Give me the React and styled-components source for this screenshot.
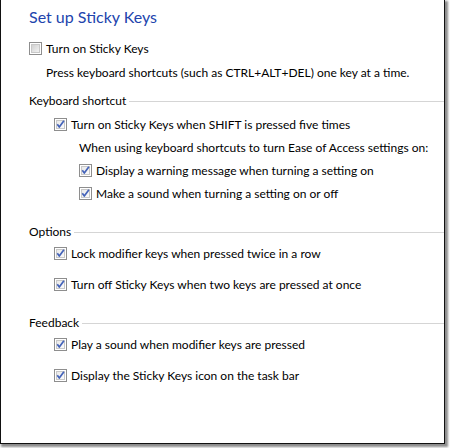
import React from 'react';
import styled, { createGlobalStyle } from 'styled-components';

const Global = createGlobalStyle`
  html, body { margin: 0; padding: 0; background: #fff; }
  body { font-family: Lato, "Open Sans", "Liberation Sans", sans-serif; }
`;

const Page = styled.div`
  width: 450px;
  height: 448px;
  background: #fff;
  overflow: hidden;
`;

const Window = styled.div`
  width: 443px;
  height: 443px;
  background: #fff;
  border: 1px solid #111;
  border-top: none;
  box-shadow: 2px 2px 2px 1px rgba(0, 0, 0, 0.45);
  display: flex;
  flex-direction: column;
  color: #000;
  font-size: 12px;
`;

const Title = styled.div`
  height: 20px;
  line-height: 20px;
  margin: 7px 0 0 28px;
  font-size: 16px;
  color: #2144ad;
`;

const Row = styled.div`
  height: 20px;
  display: flex;
  align-items: center;
  margin-top: ${({ $mt }) => $mt}px;
  padding-left: ${({ $indent }) => $indent}px;
`;

const Label = styled.span`
  margin-left: 4px;
  white-space: nowrap;
`;

const Note = styled.span`
  white-space: nowrap;
`;

const GroupRow = styled(Row)`
  padding-left: 28px;
`;

const GroupName = styled.span`
  white-space: nowrap;
  padding-right: 3px;
`;

const Rule = styled.div`
  flex: 1;
  height: 0;
  margin-top: 2px;
  border-top: 1px solid #d5d5d5;
`;

const Box = styled.svg`
  width: 13px;
  height: 13px;
  flex: none;
  display: block;
`;

const CheckBox = ({ checked }) => (
  <Box viewBox="0 0 13 13">
    <defs>
      <linearGradient id={checked ? 'gc' : 'gu'} x1="0" y1="0" x2="1" y2="1">
        <stop offset="0" stopColor={checked ? '#e8e8e8' : '#cfcfcf'} />
        <stop offset="1" stopColor={checked ? '#fcfcfc' : '#f4f4f4'} />
      </linearGradient>
    </defs>
    <rect x="0.5" y="0.5" width="12" height="12" fill="#fff" stroke="#8e8e8e" />
    <rect x="2.5" y="2.5" width="8" height="8" fill={`url(#${checked ? 'gc' : 'gu'})`} stroke="#c8c8c8" />
    {checked && (
      <polyline
        points="3.3,6.3 5.3,9 9.9,2.8"
        fill="none"
        stroke="#4463b9"
        strokeWidth="1.7"
        strokeLinejoin="round"
      />
    )}
  </Box>
);

const Option = ({ checked, mt, indent, children }) => (
  <Row $mt={mt} $indent={indent}>
    <CheckBox checked={checked} />
    <Label>{children}</Label>
  </Row>
);

const Group = ({ mt, children }) => (
  <GroupRow $mt={mt}>
    <GroupName>{children}</GroupName>
    <Rule />
  </GroupRow>
);

export default function App() {
  return (
    <Page>
      <Global />
      <Window>
        <Title>Set up Sticky Keys</Title>
        <Option mt={11} indent={28}>Turn on Sticky Keys</Option>
        <Row $mt={4} $indent={45}>
          <Note>Press keyboard shortcuts (such as CTRL+ALT+DEL) one key at a time.</Note>
        </Row>

        <Group mt={8}>Keyboard shortcut</Group>
        <Option checked mt={4} indent={53}>Turn on Sticky Keys when SHIFT is pressed five times</Option>
        <Row $mt={3} $indent={78}>
          <Note>When using keyboard shortcuts to turn Ease of Access settings on:</Note>
        </Row>
        <Option checked mt={3} indent={78}>Display a warning message when turning a setting on</Option>
        <Option checked mt={3} indent={78}>Make a sound when turning a setting on or off</Option>

        <Group mt={18}>Options</Group>
        <Option checked mt={2} indent={53}>Lock modifier keys when pressed twice in a row</Option>
        <Option checked mt={11} indent={53}>Turn off Sticky Keys when two keys are pressed at once</Option>

        <Group mt={18}>Feedback</Group>
        <Option checked mt={2} indent={53}>Play a sound when modifier keys are pressed</Option>
        <Option checked mt={11} indent={53}>Display the Sticky Keys icon on the task bar</Option>
      </Window>
    </Page>
  );
}
